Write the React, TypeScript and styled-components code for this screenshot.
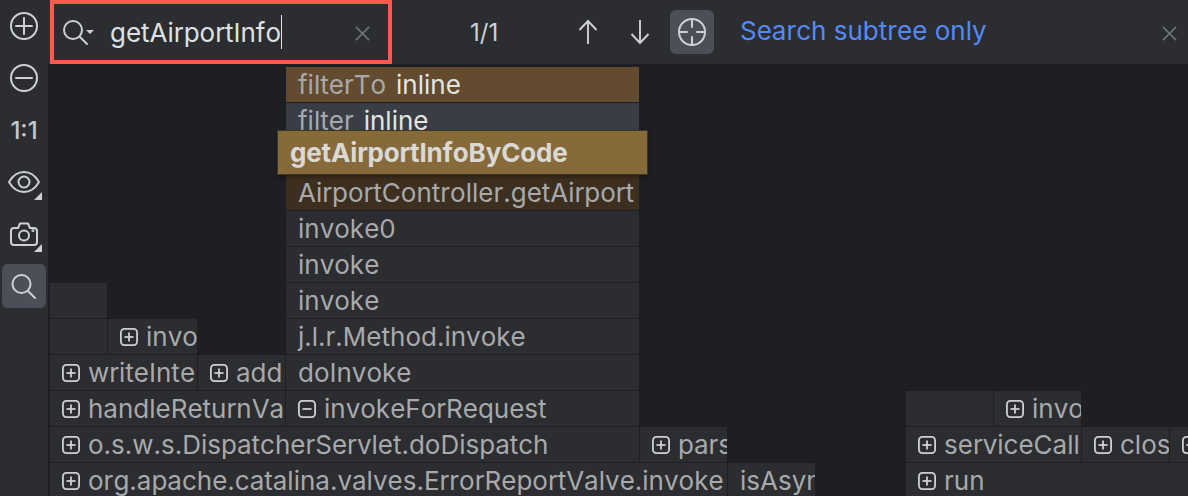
import React from "react";
import styled, { createGlobalStyle } from "styled-components";

const Global = createGlobalStyle`
  html, body { margin: 0; padding: 0; background: #1e1f22; overflow: hidden; }
  * { box-sizing: border-box; }
`;

const Page = styled.div`
  width: 1188px;
  height: 496px;
  display: flex;
  overflow: hidden;
  background: #1e1f22;
  font-family: Inter, "Liberation Sans", sans-serif;
  font-size: 26px;
  font-kerning: none;
`;

const Sidebar = styled.aside`
  width: 48px;
  flex: none;
  background: #2b2d30;
  display: flex;
  flex-direction: column;
  align-items: center;
  gap: 8px;
  padding-top: 4px;
`;

const ToolButton = styled.div<{ $active?: boolean }>`
  width: 44px;
  height: 44px;
  flex: none;
  border-radius: 6px;
  display: flex;
  align-items: center;
  justify-content: center;
  color: #c4c6cb;
  font-size: 24px;
  font-weight: 500;
  background: ${(p) => (p.$active ? "#4b5058" : "transparent")};
`;

const Main = styled.main`
  flex: 1;
  min-width: 0;
  display: flex;
  flex-direction: column;
`;

const TopBar = styled.header`
  height: 64px;
  flex: none;
  background: #2b2d30;
  display: flex;
  align-items: center;
`;

const SearchBox = styled.div`
  width: 342px;
  height: 64px;
  margin-left: 2px;
  flex: none;
  border: 4px solid #ff5a4d;
  display: flex;
  align-items: center;
  padding-left: 8px;
  color: #dfe1e5;
`;

const SearchText = styled.span`
  margin-left: 12px;
  width: 171px;
  flex: none;
  white-space: nowrap;
`;

const Caret = styled.span`
  width: 1px;
  height: 34px;
  flex: none;
  background: #dfe1e5;
`;

const ClearSlot = styled.div`
  margin: 2px 0 0 73px;
  display: flex;
  color: #6f737a;
`;

const Counter = styled.span`
  margin-left: 78px;
  width: 28px;
  flex: none;
  color: #ced0d6;
  font-size: 24px;
  white-space: nowrap;
`;

const ArrowSlot = styled.div<{ $gap: number }>`
  margin-left: ${(p) => p.$gap}px;
  width: 32px;
  height: 44px;
  flex: none;
  display: flex;
  align-items: center;
  justify-content: center;
  color: #ced0d6;
`;

const TargetButton = styled(ToolButton)`
  margin-left: 14px;
  background: #4b5058;
`;

const SubtreeLink = styled.span`
  margin: 0 0 4px 26px;
  color: #548af7;
  white-space: nowrap;
`;

const CloseSlot = styled.div`
  margin: 2px 11px 0 auto;
  display: flex;
  color: #6f737a;
`;

const Flame = styled.section`
  position: relative;
  flex: 1;
  min-height: 0;
  padding: 3px 0 0 2px;
  display: flex;
  flex-direction: column;
  gap: 1px;
  overflow: hidden;
`;

const Row = styled.div`
  height: 35px;
  flex: none;
  display: flex;
  gap: 1px;
`;

const Spacer = styled.div<{ $w: number }>`
  width: ${(p) => p.$w}px;
  flex: none;
`;

type Tone = "plain" | "filterTo" | "filter" | "match";

const toneColor: Record<Tone, string> = {
  plain: "#2b2d30",
  filterTo: "#624b2e",
  filter: "#393e46",
  match: "#3d2f1f",
};

const Cell = styled.div<{ $w?: number; $tone: Tone }>`
  ${(p) => (p.$w ? `width: ${p.$w}px; flex: none;` : "flex: 1; min-width: 0;")}
  height: 35px;
  display: flex;
  align-items: center;
  gap: 8px;
  padding-left: 12px;
  overflow: hidden;
  white-space: nowrap;
  color: #a8a9ab;
  line-height: 35px;
  background: ${(p) => toneColor[p.$tone]};
`;

const Inline = styled.span`
  margin-left: 10px;
  color: #e6e4e0;
`;

const Label = styled.span`
  display: inline-flex;
  white-space: pre;
`;

const IconBox = styled.svg`
  flex: none;
  width: 18px;
  height: 18px;
  color: #ced0d6;
`;

const MatchBanner = styled.div`
  position: absolute;
  left: 229px;
  top: 66px;
  width: 371px;
  height: 45px;
  padding-left: 12px;
  display: flex;
  align-items: center;
  background: #876a3a;
  border: 1px solid #3f3524;
  box-shadow: 0 2px 4px rgba(0, 0, 0, 0.35);
  color: #dad9d6;
  font-weight: 700;
  letter-spacing: -0.15px;
  white-space: nowrap;
`;

const ExpandIcon = ({ minus }: { minus?: boolean }) => (
  <IconBox viewBox="0 0 18 18" fill="none" stroke="currentColor" strokeWidth="1.8">
    <rect x="0.9" y="0.9" width="16.2" height="16.2" rx="3.5" />
    <path d="M4.500 9h9" />
    {!minus && <path d="M9 4.500v9" />}
  </IconBox>
);

const Glyph = ({ children }: { children: React.ReactNode }) => (
  <svg width="44" height="44" viewBox="0 0 44 44" fill="none" stroke="#ced0d6" strokeWidth="2" strokeLinecap="round" strokeLinejoin="round">
    {children}
  </svg>
);

const Corner = () => <path d="M40 32v8h-8z" fill="#ced0d6" stroke="none" />;

const Cross = ({ size }: { size: number }) => (
  <svg width={size} height={size} viewBox="0 0 16 16" fill="none" stroke="currentColor" strokeWidth="1.7">
    <path d="M1 1l14 14M15 1L1 15" />
  </svg>
);

type CellData = { w?: number; text?: string; inline?: string; icon?: "plus" | "minus"; tone?: Tone };
type Item = { gap: number } | CellData;

const rows: Item[][] = [
  [{ gap: 235 }, { w: 353, text: "filterTo", inline: "inline", tone: "filterTo" }],
  [{ gap: 235 }, { w: 353, text: "filter", inline: "inline", tone: "filter" }],
  [{ gap: 235 }, { w: 353, tone: "match" }],
  [{ gap: 235 }, { w: 353, text: "AirportController.getAirport", tone: "match" }],
  [{ gap: 235 }, { w: 353, text: "invoke0" }],
  [{ gap: 235 }, { w: 353, text: "invoke" }],
  [{ w: 57 }, { gap: 177 }, { w: 353, text: "invoke" }],
  [{ w: 57 }, { w: 89, text: "invo", icon: "plus" }, { gap: 87 }, { w: 353, text: "j.l.r.Method.invoke" }],
  [{ w: 147, text: "writeInte", icon: "plus" }, { w: 87, text: "add", icon: "plus" }, { w: 353, text: "doInvoke" }],
  [{ w: 235, text: "handleReturnVa", icon: "plus" }, { w: 353, text: "invokeForRequest", icon: "minus" }, { gap: 265 }, { w: 87 }, { w: 87, text: "invo", icon: "plus" }],
  [{ w: 589, text: "o.s.w.s.DispatcherServlet.doDispatch", icon: "plus" }, { w: 87, text: "pars", icon: "plus" }, { gap: 177 }, { w: 175, text: "serviceCall", icon: "plus" }, { w: 87, text: "clos", icon: "plus" }, { text: "", icon: "plus" }],
  [{ w: 677, text: "org.apache.catalina.valves.ErrorReportValve.invoke", icon: "plus" }, { w: 87, text: "isAsyn" }, { gap: 89 }, { text: "run", icon: "plus" }],
];

export default function App() {
  return (
    <Page>
      <Global />
      <Sidebar>
        <ToolButton>
          <Glyph>
            <circle cx="22" cy="22" r="13" />
            <path d="M14 22h16M22 14v16" />
          </Glyph>
        </ToolButton>
        <ToolButton>
          <Glyph>
            <circle cx="22" cy="22" r="13" />
            <path d="M14 22h16" />
          </Glyph>
        </ToolButton>
        <ToolButton>1:1</ToolButton>
        <ToolButton>
          <Glyph>
            <path d="M7 22C11 15 16 12 22 12s11 3 15 10c-4 7-9 10-15 10S11 29 7 22z" />
            <circle cx="22" cy="22" r="5.500" />
            <Corner />
          </Glyph>
        </ToolButton>
        <ToolButton>
          <Glyph>
            <path d="M12 16h4l2-4.500h8l2 4.500h4a3 3 0 0 1 3 3v11a3 3 0 0 1-3 3H12a3 3 0 0 1-3-3V19a3 3 0 0 1 3-3z" />
            <circle cx="22" cy="23.500" r="5" />
            <circle cx="31" cy="18.500" r="0.6" />
            <Corner />
          </Glyph>
        </ToolButton>
        <ToolButton $active>
          <Glyph>
            <circle cx="19.500" cy="20" r="9" />
            <path d="M26 27l7 7" />
          </Glyph>
        </ToolButton>
      </Sidebar>
      <Main>
        <TopBar>
          <SearchBox>
            <svg width="36" height="36" viewBox="0 0 36 36" fill="none" stroke="#ced0d6" strokeWidth="2" strokeLinecap="round">
              <circle cx="11" cy="16" r="9" />
              <path d="M18 23l7 7" />
              <path d="M24 16h8l-4 4z" fill="#ced0d6" stroke="none" />
            </svg>
            <SearchText>getAirportInfo</SearchText>
            <Caret />
            <ClearSlot>
              <Cross size={15} />
            </ClearSlot>
          </SearchBox>
          <Counter>1/1</Counter>
          <ArrowSlot $gap={74}>
            <svg width="20" height="26" viewBox="0 0 20 26" fill="none" stroke="currentColor" strokeWidth="1.9">
              <path d="M10 25V2M1.500 11L10 2l8.500 9" />
            </svg>
          </ArrowSlot>
          <ArrowSlot $gap={20}>
            <svg width="20" height="26" viewBox="0 0 20 26" fill="none" stroke="currentColor" strokeWidth="1.9">
              <path d="M10 1v23M1.500 15L10 24l8.500-9" />
            </svg>
          </ArrowSlot>
          <TargetButton>
            <Glyph>
              <circle cx="22" cy="22" r="13" />
              <path d="M22 9v8M22 27v8M9 22h8M27 22h8" />
            </Glyph>
          </TargetButton>
          <SubtreeLink>Search subtree only</SubtreeLink>
          <CloseSlot>
            <Cross size={15} />
          </CloseSlot>
        </TopBar>
        <Flame>
          {rows.map((row, i) => (
            <Row key={i}>
              {row.map((item, j) =>
                "gap" in item ? (
                  <Spacer key={j} $w={item.gap} />
                ) : (
                  <Cell key={j} $w={item.w} $tone={item.tone ?? "plain"}>
                    {item.icon && <ExpandIcon minus={item.icon === "minus"} />}
                    {item.text && (
                      <Label>
                        {item.text}
                        {item.inline && <Inline>{item.inline}</Inline>}
                      </Label>
                    )}
                  </Cell>
                )
              )}
            </Row>
          ))}
          <MatchBanner>getAirportInfoByCode</MatchBanner>
        </Flame>
      </Main>
    </Page>
  );
}
